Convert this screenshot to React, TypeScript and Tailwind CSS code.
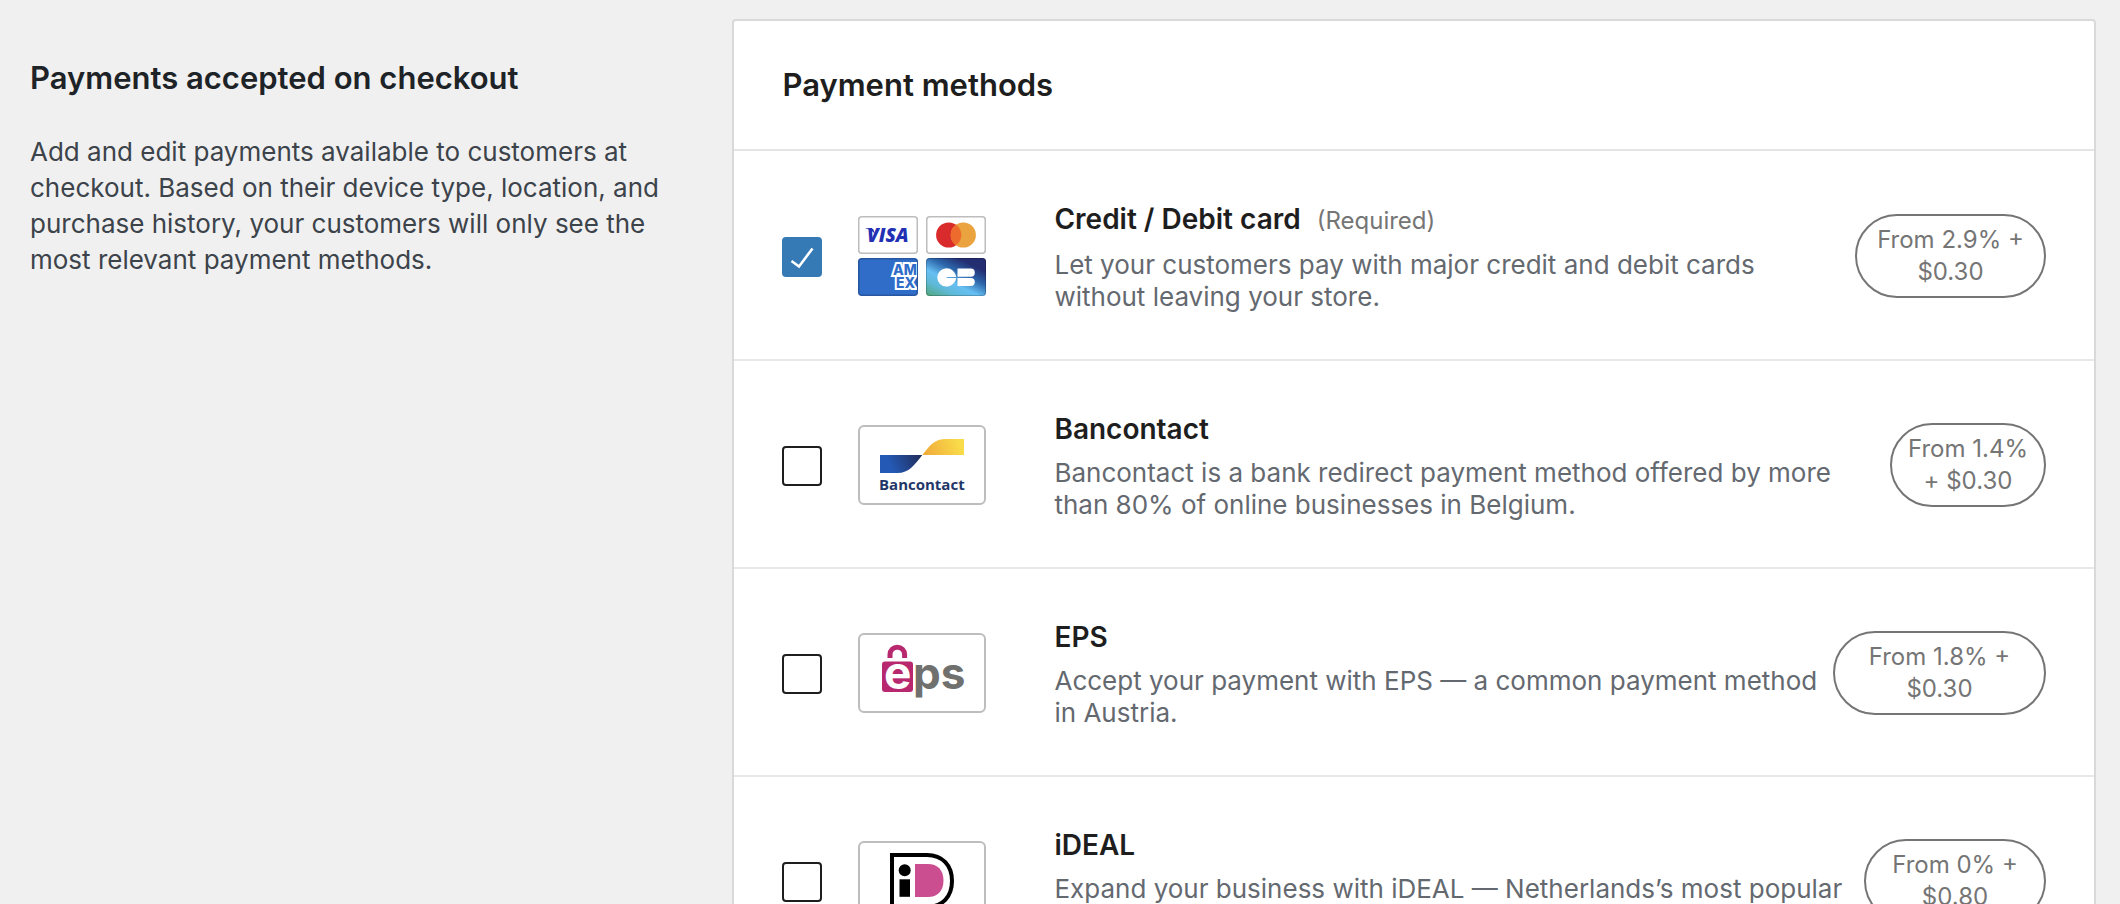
import { ReactNode, useState } from "react";
import { clsx } from "clsx";

type PaymentMethod = {
  id: string;
  name: string;
  description: string;
  fee: string;
  feeWidth: string;
  required?: boolean;
  icon: ReactNode;
};

function VisaIcon() {
  return (
    <svg viewBox="0 0 60 38" className="h-[38px] w-[60px]">
      <rect x="0.75" y="0.75" width="58.5" height="36.5" rx="3" fill="#fff" stroke="#bdbdbd" strokeWidth="1.5" />
      <path d="M7.500 12.200h6l2 1.400 1.600 5.200c-1.600-3-4.600-5.300-9.600-6.200z" fill="#2230b4" />
      <text x="9" y="26" fontFamily="Open Sans, sans-serif" fontWeight="800" fontStyle="italic" fontSize="19" fill="#2230b4">
        VISA
      </text>
    </svg>
  );
}

function MastercardIcon() {
  return (
    <svg viewBox="0 0 60 38" className="h-[38px] w-[60px]">
      <rect x="0.75" y="0.75" width="58.5" height="36.5" rx="3" fill="#fff" stroke="#bdbdbd" strokeWidth="1.5" />
      <circle cx="22.700" cy="19" r="12.600" fill="#d92b2b" />
      <circle cx="37.300" cy="19" r="12.600" fill="#eaa33e" />
      <path d="M30 8.730a12.600 12.600 0 0 1 0 20.540a12.600 12.600 0 0 1 0-20.540z" fill="#ec6b2d" />
    </svg>
  );
}

function AmexIcon() {
  return (
    <svg viewBox="0 0 60 38" className="h-[38px] w-[60px]">
      <defs>
        <clipPath id="amex-clip">
          <rect width="59" height="38" rx="3.500" />
        </clipPath>
      </defs>
      <rect x="0.75" y="0.75" width="58.5" height="36.5" rx="3" fill="#2f6dc9" stroke="#2757a1" strokeWidth="1.5" />
      <g
        clipPath="url(#amex-clip)"
        fontFamily="Inter, sans-serif"
        fontWeight="800"
        fontSize="14"
        fill="#2f6dc9"
        stroke="#fff"
        strokeWidth="4"
        paintOrder="stroke"
      >
        <text x="35" y="17">AM</text>
        <text x="38" y="30">EX</text>
      </g>
    </svg>
  );
}

function CartesBancairesIcon() {
  return (
    <svg viewBox="0 0 60 38" className="h-[38px] w-[60px]">
      <defs>
        <linearGradient id="cb-bg" x1="16" y1="44" x2="38" y2="0" gradientUnits="userSpaceOnUse">
          <stop offset="0" stopColor="#52a983" />
          <stop offset="0.25" stopColor="#5fb9d8" />
          <stop offset="0.45" stopColor="#66bff2" />
          <stop offset="0.7" stopColor="#2c66ab" />
          <stop offset="0.95" stopColor="#232d70" />
        </linearGradient>
      </defs>
      <rect width="60" height="38" rx="3.500" fill="url(#cb-bg)" />
      <rect x="0.5" y="0.5" width="59" height="37" rx="3" fill="none" stroke="#000" strokeOpacity="0.2" />
      <path d="M20.500 10.200a9.200 9.200 0 1 0 0 18.400c4.500 0 8.600-3.300 9.800-8.700h-9.800v-1h9.800c-1.200-5.400-5.300-8.700-9.800-8.700z" fill="#fff" />
      <path d="M31.500 10.600h13.200a4 4 0 0 1 0 8.200h-13.200z" fill="#fff" />
      <path d="M31.500 19.900h13.200a4 4 0 0 1 0 8.200h-13.200z" fill="#fff" />
    </svg>
  );
}

function CardIcons() {
  return (
    <div className="grid grid-cols-2 gap-x-2 gap-y-1">
      <VisaIcon />
      <MastercardIcon />
      <AmexIcon />
      <CartesBancairesIcon />
    </div>
  );
}

function LogoFrame({ children }: { children: ReactNode }) {
  return (
    <svg viewBox="0 0 128 80" className="h-20 w-32">
      <rect x="1" y="1" width="126" height="78" rx="5" fill="#fff" stroke="#bdbdbd" strokeWidth="2" />
      {children}
    </svg>
  );
}

function BancontactIcon() {
  return (
    <LogoFrame>
      <defs>
        <linearGradient id="bc-blue" x1="32" y1="40" x2="60" y2="28" gradientUnits="userSpaceOnUse">
          <stop offset="0" stopColor="#2459b5" />
          <stop offset="1" stopColor="#22305f" />
        </linearGradient>
        <linearGradient id="bc-yellow" x1="68" y1="30" x2="102" y2="18" gradientUnits="userSpaceOnUse">
          <stop offset="0" stopColor="#f0ad3b" />
          <stop offset="1" stopColor="#f9dc4a" />
        </linearGradient>
      </defs>
      <path d="M22 30h42.300c-8 10-13 18-25 18H22z" fill="url(#bc-blue)" />
      <path d="M64.300 30c8-10 12-16 24-16H106v16z" fill="url(#bc-yellow)" />
      <text x="21" y="65" fontFamily="Open Sans, sans-serif" fontWeight="700" fontSize="15" fill="#1f3768">
        Bancontact
      </text>
    </LogoFrame>
  );
}

function EpsIcon() {
  return (
    <LogoFrame>
      <path d="M32 25v-3.500a7.300 7.300 0 0 1 14.600 0V25" fill="none" stroke="#b8286f" strokeWidth="5" />
      <rect x="24" y="28.500" width="31" height="30.500" rx="3" fill="#b8286f" />
      <g fontFamily="Inter, sans-serif" fontWeight="700">
        <text x="26" y="56" fontSize="46" fill="#fff">
          e
        </text>
        <text x="55" y="56" fontSize="44" fill="#70706e">
          ps
        </text>
      </g>
    </LogoFrame>
  );
}

function IdealIcon() {
  return (
    <LogoFrame>
      <path d="M34 14h35c15.500 0 25 10.500 25 26s-9.500 26-25 26H34z" fill="#fff" stroke="#000" strokeWidth="4" />
      <circle cx="46.700" cy="29.300" r="6" />
      <rect x="41.500" y="38.300" width="10.500" height="17.500" />
      <path d="M57 23h13c9.500 0 15.500 6 15.500 16.500S79.500 56 70 56H57z" fill="#cb4e91" />
    </LogoFrame>
  );
}

const paymentMethods: PaymentMethod[] = [
  {
    id: "card",
    name: "Credit / Debit card",
    description:
      "Let your customers pay with major credit and debit cards without leaving your store.",
    fee: "From 2.9% + $0.30",
    feeWidth: "w-[191px]",
    required: true,
    icon: <CardIcons />,
  },
  {
    id: "bancontact",
    name: "Bancontact",
    description:
      "Bancontact is a bank redirect payment method offered by more than 80% of online businesses in Belgium.",
    fee: "From 1.4% + $0.30",
    feeWidth: "w-[156px]",
    icon: <BancontactIcon />,
  },
  {
    id: "eps",
    name: "EPS",
    description:
      "Accept your payment with EPS — a common payment method in Austria.",
    fee: "From 1.8% + $0.30",
    feeWidth: "w-[213px]",
    icon: <EpsIcon />,
  },
  {
    id: "ideal",
    name: "iDEAL",
    description:
      "Expand your business with iDEAL — Netherlands’s most popular payment method.",
    fee: "From 0% + $0.80",
    feeWidth: "w-[182px]",
    icon: <IdealIcon />,
  },
];

function PaymentMethodRow({
  method,
  checked,
  onChange,
}: {
  method: PaymentMethod;
  checked: boolean;
  onChange: () => void;
}) {
  return (
    <li className="flex items-center border-b-2 border-[#e8e8e8] px-12 pt-12 pb-[46px] last:border-b-0">
      <div className="grid shrink-0 place-items-center pt-0.5">
        <input
          type="checkbox"
          id={method.id}
          checked={checked}
          onChange={onChange}
          className="peer col-start-1 row-start-1 h-10 w-10 appearance-none rounded border-2 border-[#1e1e1e] bg-white checked:border-[#3579b5] checked:bg-[#3579b5]"
        />
        <svg
          viewBox="0 0 40 40"
          className="pointer-events-none invisible col-start-1 row-start-1 h-10 w-10 peer-checked:visible"
        >
          <path d="M9.500 24L17 29.500L30.500 11.500" fill="none" stroke="#fff" strokeWidth="2.600" />
        </svg>
      </div>

      <div className="ml-9 shrink-0">{method.icon}</div>

      <div className="mr-2 ml-17 min-w-0 flex-1 pt-1">
        <div className="flex items-baseline gap-4">
          <label htmlFor={method.id} className="text-[28px] leading-8 font-semibold text-[#1e1e1e]">
            {method.name}
          </label>
          {method.required && (
            <span className="text-2xl leading-8 text-[#757575]">(Required)</span>
          )}
        </div>
        <p className="mt-3 text-[26px] leading-8 text-[#646970]">{method.description}</p>
      </div>

      <div
        className={clsx(
          "shrink-0 rounded-full border-2 border-[#757575] px-3 py-2 text-center text-2xl leading-8 text-[#757575]",
          method.feeWidth
        )}
      >
        {method.fee}
      </div>
    </li>
  );
}

export default function App() {
  const [enabled, setEnabled] = useState<string[]>(["card"]);

  function toggle(id: string) {
    setEnabled((prev) =>
      prev.includes(id) ? prev.filter((item) => item !== id) : [...prev, id]
    );
  }

  return (
    <main className="grid min-h-screen grid-cols-[34fr_66fr] items-start bg-[#f0f0f0] pt-[19px] pr-6 pb-12 pl-[30px] font-[Inter,sans-serif]">
      <section className="pt-[39px]">
        <h2 className="text-[31px] leading-10 font-semibold text-[#1d2327]">
          Payments accepted on checkout
        </h2>
        <p className="mt-9 max-w-[650px] text-[26px] leading-9 text-[#3c434a]">
          Add and edit payments available to customers at checkout. Based on
          their device type, location, and purchase history, your customers will
          only see the most relevant payment methods.
        </p>
      </section>

      <section className="rounded border-2 border-[#d9d9d9] bg-white">
        <div className="border-b-2 border-[#e5e5e5] px-12 py-11">
          <h3 className="text-[31px] leading-10 font-semibold text-[#1e1e1e]">
            Payment methods
          </h3>
        </div>
        <ul>
          {paymentMethods.map((method) => (
            <PaymentMethodRow
              key={method.id}
              method={method}
              checked={enabled.includes(method.id)}
              onChange={() => toggle(method.id)}
            />
          ))}
        </ul>
      </section>
    </main>
  );
}
